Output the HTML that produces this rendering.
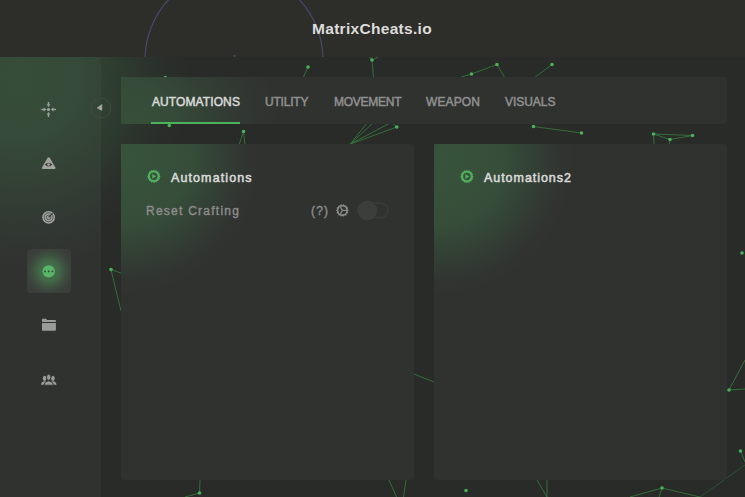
<!DOCTYPE html>
<html><head><meta charset="utf-8">
<style>
*{margin:0;padding:0;box-sizing:border-box}
html,body{width:745px;height:497px;overflow:hidden;background:#292b29;font-family:"Liberation Sans",sans-serif}
.abs{position:absolute}
#hdr{left:0;top:0;width:745px;height:57px;background:#2d2e29;overflow:hidden}
#title{left:312px;top:19.5px;font-size:15.5px;font-weight:bold;color:#dcdcdc;white-space:nowrap;letter-spacing:0.3px}
#side{left:0;top:57px;width:101px;height:440px;background:#303230;
 background-image:radial-gradient(circle at 20px 23px,rgba(72,160,85,0.250) 0px,rgba(72,160,85,0.220) 60px,rgba(72,160,85,0.120) 110px,rgba(72,160,85,0.050) 150px,rgba(72,160,85,0.000) 190px)}
#content{left:101px;top:57px;width:644px;height:440px;
 background-image:radial-gradient(circle at -81px 23px,rgba(72,160,85,0.270) 0px,rgba(72,160,85,0.240) 60px,rgba(72,160,85,0.140) 100px,rgba(72,160,85,0.040) 140px,rgba(72,160,85,0.000) 170px)}
.card{background:#303230;border-radius:4px}
#tabs{left:121px;top:77px;width:606px;height:47px;}
#tabs::before{content:"";position:absolute;left:0;top:0;right:0;bottom:0;background-image:radial-gradient(circle at 5px 55px,rgba(72,160,85,0.270) 0px,rgba(72,160,85,0.234) 46px,rgba(72,160,85,0.108) 92px,rgba(72,160,85,0.027) 132px,rgba(72,160,85,0.000) 155px)}
#p1{left:121px;top:144px;width:293px;height:336px;}
#p1::before{content:"";position:absolute;left:0;top:0;right:0;bottom:0;background-image:radial-gradient(circle at 5px 15px,rgba(72,160,85,0.300) 0px,rgba(72,160,85,0.250) 65px,rgba(72,160,85,0.100) 100px,rgba(72,160,85,0.020) 122px,rgba(72,160,85,0.000) 135px)}
#p2{left:434px;top:144px;width:293px;height:336px;}
#p2::before{content:"";position:absolute;left:0;top:0;right:0;bottom:0;background-image:radial-gradient(circle at 5px 17px,rgba(72,160,85,0.300) 0px,rgba(72,160,85,0.250) 65px,rgba(72,160,85,0.100) 100px,rgba(72,160,85,0.020) 122px,rgba(72,160,85,0.000) 135px)}
.tab{position:absolute;top:17.5px;font-size:12px;font-weight:normal;color:#8f8f8f;white-space:nowrap;-webkit-text-stroke:0.5px #8f8f8f}
.tab.act{-webkit-text-stroke:0.5px #d8d8d8}
.tab.act{color:#d8d8d8}
#uline{left:30px;top:45px;width:89px;height:2px;background:#4cb35c}
.ptitle{position:absolute;font-size:12.5px;font-weight:normal;color:#d9d9d9;white-space:nowrap;letter-spacing:0.4px;-webkit-text-stroke:0.55px #d9d9d9}
.opt{position:absolute;font-size:12px;color:#8c8c8c;white-space:nowrap;-webkit-text-stroke:0.4px #8c8c8c}
#actbtn{left:27px;top:249px;width:44px;height:44px;border-radius:4px;background:#3a3d3a;
 background-image:radial-gradient(circle at 22px 22px,rgba(80,180,95,.5) 0,rgba(80,180,95,.36) 10px,rgba(80,180,95,.14) 17px,rgba(80,180,95,.04) 22px,rgba(80,180,95,0) 27px)}
</style></head><body>
<div id="hdr" class="abs">
 <svg class="abs" style="left:0;top:0" width="745" height="57">
  <circle cx="234" cy="60" r="89" fill="none" stroke="#474a6a" stroke-width="1.2"/>
  <circle cx="234.5" cy="56" r="0.9" fill="#4a4c70"/>
 </svg>
 <div id="title" class="abs">MatrixCheats.io</div>
</div>

<div id="content" class="abs"></div>
<svg class="abs" width="745" height="497" style="top:0;left:0">
 <g stroke="#377d40" stroke-width="0.8" fill="none">
  <line x1="308" y1="67" x2="303" y2="78"/>
  <line x1="372" y1="60" x2="373.5" y2="78"/>
  <line x1="372" y1="60" x2="378" y2="57"/>
  <line x1="372" y1="60" x2="369.5" y2="57"/>
  <line x1="461" y1="77" x2="471.5" y2="74"/>
  <line x1="471.5" y1="74" x2="497" y2="64.5"/>
  <line x1="497" y1="64.5" x2="505" y2="78"/>
  <line x1="552" y1="64.5" x2="534" y2="78"/>
  <line x1="243.5" y1="131.5" x2="245" y2="145"/>
  <line x1="243.5" y1="131.5" x2="239" y2="145"/>
  <line x1="396.8" y1="127" x2="350.4" y2="144"/>
  <line x1="350.4" y1="144" x2="367" y2="123"/>
  <line x1="350.4" y1="144" x2="373" y2="123"/>
  <line x1="350.4" y1="144" x2="390" y2="123"/>
  <line x1="396.8" y1="127" x2="392" y2="123"/>
  <line x1="533.5" y1="126.5" x2="581.5" y2="133"/>
  <line x1="653.5" y1="134" x2="670" y2="139.5"/>
  <line x1="670" y1="139.5" x2="692.5" y2="135.5"/>
  <line x1="653.5" y1="134" x2="692.5" y2="135.5"/>
  <line x1="653.5" y1="134" x2="654" y2="145"/>
  <line x1="670" y1="139.5" x2="669" y2="145"/>
  <line x1="111" y1="269.5" x2="122" y2="273.5"/>
  <line x1="111" y1="269.5" x2="121" y2="311"/>
  <line x1="414" y1="374" x2="434" y2="382"/>
  <line x1="389" y1="480" x2="396.5" y2="497"/>
  <line x1="406" y1="480" x2="403.5" y2="497"/>
  <line x1="199.5" y1="493" x2="200" y2="480"/>
  <line x1="199.5" y1="493" x2="185" y2="497"/>
  <line x1="537" y1="480" x2="547" y2="497"/>
  <line x1="547" y1="480" x2="547" y2="497"/>
  <line x1="662" y1="488" x2="630" y2="497"/>
  <line x1="662" y1="488" x2="700" y2="497"/>
  <line x1="662" y1="488" x2="659" y2="497"/>
  <line x1="700" y1="497" x2="745" y2="465" opacity=".6"/>
  <line x1="740.5" y1="451" x2="745" y2="462"/>
  <line x1="729" y1="390" x2="745" y2="360"/>
  <line x1="729" y1="390" x2="745" y2="389"/>
 </g>
 <g fill="#4cb05a">
  <circle cx="308" cy="67" r="1.8"/>
  <circle cx="165.3" cy="77.5" r="1.8"/>
  <circle cx="169.3" cy="125.5" r="1.8"/>
  <circle cx="372" cy="60" r="1.8"/>
  <circle cx="471.5" cy="74" r="1.8"/>
  <circle cx="497" cy="64.5" r="1.8"/>
  <circle cx="552" cy="64.5" r="1.8"/>
  <circle cx="243.5" cy="131.5" r="1.8"/>
  <circle cx="396.8" cy="127" r="1.8"/>
  <circle cx="533.5" cy="126.5" r="1.8"/>
  <circle cx="581.5" cy="133" r="1.8"/>
  <circle cx="653.5" cy="134" r="1.8"/>
  <circle cx="670" cy="139.5" r="1.8"/>
  <circle cx="692.5" cy="135.5" r="1.8"/>
  <circle cx="111" cy="269.5" r="1.8"/>
  <circle cx="199.5" cy="493" r="1.8"/>
  <circle cx="466" cy="490.5" r="1.8"/>
  <circle cx="662" cy="488" r="1.8"/>
  <circle cx="740.5" cy="451" r="1.8"/>
  <circle cx="742" cy="253" r="1.8"/>
  <circle cx="729" cy="390" r="1.8"/>
 </g>
</svg>

<div id="side" class="abs"></div>

<div id="actbtn" class="abs"></div>

<svg class="abs" width="125" height="497" style="top:0;left:0">
 <!-- collapse button -->
 <circle cx="100.9" cy="108.1" r="9.8" fill="none" stroke="#434b43" stroke-width="0.9"/>
 <path d="M96.7,108.1 L102.2,103.9 L102.2,111 Z" fill="#a3a5a3"/>
 <!-- crosshair icon -->
 <g fill="#a0a2a0" stroke="#a0a2a0" stroke-width="1.4">
  <line x1="48.5" y1="102" x2="48.5" y2="104.6"/>
  <path d="M46.6,104.2 L50.4,104.2 L48.5,106.9Z" stroke="none"/>
  <line x1="48.5" y1="117" x2="48.5" y2="114.4"/>
  <path d="M46.6,114.8 L50.4,114.8 L48.5,112.1Z" stroke="none"/>
  <line x1="41.3" y1="109.5" x2="44.1" y2="109.5"/>
  <path d="M43.7,107.6 L43.7,111.4 L46.4,109.5Z" stroke="none"/>
  <line x1="55.9" y1="109.5" x2="53.1" y2="109.5"/>
  <path d="M53.5,107.6 L53.5,111.4 L50.8,109.5Z" stroke="none"/>
  <circle cx="48.5" cy="109.5" r="1.6" stroke="none"/>
 </g>
 <!-- eye triangle -->
 <path d="M48.6,157.2 Q49.3,157.2 49.8,158 L55.4,167.6 Q56,169 54.6,169 L42.8,169 Q41.3,169 42,167.6 L47.5,158 Q48,157.2 48.6,157.2Z" fill="#a2a4a2"/>
 <path d="M44.9,164.6 Q48.6,160.9 52.3,164.6 Q48.6,168.3 44.9,164.6Z" fill="#2f3a30"/>
 <circle cx="48.6" cy="164.6" r="1.3" fill="#a2a4a2"/>
 <!-- radar -->
 <circle cx="48.6" cy="217.3" r="6.4" fill="#a0a2a0"/>
 <circle cx="48.6" cy="217.3" r="4.5" fill="none" stroke="#3a423a" stroke-width="0.75"/>
 <circle cx="48.6" cy="217.3" r="2.3" fill="none" stroke="#3a423a" stroke-width="0.75"/>
 <line x1="48.6" y1="217.3" x2="52.6" y2="213.3" stroke="#2f352f" stroke-width="1.1"/>
 <!-- active dots -->
 <circle cx="48.7" cy="271.4" r="6.2" fill="#5ab46a"/>
 <circle cx="45" cy="271.4" r="0.9" fill="#2f4a34"/>
 <circle cx="48.7" cy="271.4" r="0.9" fill="#2f4a34"/>
 <circle cx="52.4" cy="271.4" r="0.9" fill="#2f4a34"/>
 <!-- folder -->
 <path d="M42,319.5 Q42,318.8 42.7,318.8 L46,318.8 L47.2,320 L55.2,320 Q55.9,320 55.9,320.7 L55.9,322 L42,322Z" fill="#9a9c9a"/>
 <path d="M42,323 L55.9,323 L55.9,330.1 Q55.9,330.8 55.2,330.8 L42.7,330.8 Q42,330.8 42,330.1Z" fill="#9a9c9a"/>
 <!-- group -->
 <g fill="#9a9c9a">
  <ellipse cx="44.6" cy="378.3" rx="1.8" ry="2.6"/>
  <ellipse cx="52.9" cy="378.3" rx="1.8" ry="2.6"/>
  <path d="M40.9,384.8 Q41.3,381.6 44.6,381.2 Q47.5,381.4 48,384.8Z"/>
  <path d="M56.6,384.8 Q56.2,381.6 52.9,381.2 Q50,381.4 49.5,384.8Z"/>
 </g>
 <g fill="#9a9c9a" stroke="#303230" stroke-width="0.9">
  <ellipse cx="48.7" cy="377.2" rx="2.2" ry="3"/>
  <path d="M43.8,385.2 Q44.3,381.3 48.7,380.8 Q53.1,381.3 53.6,385.2Z"/>
 </g>
</svg>

<div id="tabs" class="abs card">
 <div class="tab act" style="left:31px;letter-spacing:0.1px">AUTOMATIONS</div>
 <div class="tab" style="left:144px;letter-spacing:-0.2px">UTILITY</div>
 <div class="tab" style="left:213px;letter-spacing:-0.25px">MOVEMENT</div>
 <div class="tab" style="left:305px;letter-spacing:0.1px">WEAPON</div>
 <div class="tab" style="left:384px;letter-spacing:-0.05px">VISUALS</div>
 <div id="uline" class="abs"></div>
</div>

<div id="p1" class="abs card">
 <svg class="abs" style="left:0;top:0" width="293" height="100">
  <path transform="translate(32.8,32.3)" fill="#50ae5e" fill-rule="evenodd" d="M0.00,-6.80 L1.11,-5.59 L2.60,-6.28 L3.17,-4.74 L4.81,-4.81 L4.74,-3.17 L6.28,-2.60 L5.59,-1.11 L6.80,0.00 L5.59,1.11 L6.28,2.60 L4.74,3.17 L4.81,4.81 L3.17,4.74 L2.60,6.28 L1.11,5.59 L0.00,6.80 L-1.11,5.59 L-2.60,6.28 L-3.17,4.74 L-4.81,4.81 L-4.74,3.17 L-6.28,2.60 L-5.59,1.11 L-6.80,0.00 L-5.59,-1.11 L-6.28,-2.60 L-4.74,-3.17 L-4.81,-4.81 L-3.17,-4.74 L-2.60,-6.28 L-1.11,-5.59Z M3.7,0 A3.7,3.7 0 1,0 -3.7,0 A3.7,3.7 0 1,0 3.7,0Z"/>
  <path transform="translate(32.8,32.3)" fill="#50ae5e" d="M-1.5,-2.4 L2.4,0 L-1.5,2.4Z"/>
  <path transform="translate(221.4,66.4)" fill="#8c8e8c" fill-rule="evenodd" d="M6.40,0.00 L5.26,1.20 L5.77,2.78 L4.22,3.37 L3.99,5.00 L2.34,4.87 L1.42,6.24 L0.00,5.40 L-1.42,6.24 L-2.34,4.87 L-3.99,5.00 L-4.22,3.37 L-5.77,2.78 L-5.26,1.20 L-6.40,0.00 L-5.26,-1.20 L-5.77,-2.78 L-4.22,-3.37 L-3.99,-5.00 L-2.34,-4.87 L-1.42,-6.24 L-0.00,-5.40 L1.42,-6.24 L2.34,-4.87 L3.99,-5.00 L4.22,-3.37 L5.77,-2.78 L5.26,-1.20Z M3.9,0 A3.9,3.9 0 1,0 -3.9,0 A3.9,3.9 0 1,0 3.9,0Z"/>
  <g transform="translate(221.4,66.4)" stroke="#8c8e8c" stroke-width="1.2">
   <line x1="0" y1="0" x2="4" y2="0"/>
   <line x1="0" y1="0" x2="-2" y2="-3.46"/>
   <line x1="0" y1="0" x2="-2" y2="3.46"/>
  </g>
  <!-- toggle -->
  <rect x="236.5" y="59" width="30.5" height="14.8" rx="7.4" fill="none" stroke="#3c3f3c" stroke-width="1"/>
  <circle cx="246.3" cy="66.4" r="9.9" fill="#3c3e3c"/>
 </svg>
 <div class="ptitle" style="left:50px;top:27px;letter-spacing:1.1px">Automations</div>
 <div class="opt" style="left:25px;top:60px;letter-spacing:1.25px">Reset Crafting</div>
 <div class="opt" style="left:190px;top:60px;letter-spacing:1.2px">(?)</div>
</div>
<div id="p2" class="abs card">
 <svg class="abs" style="left:0;top:0" width="293" height="60">
  <path transform="translate(32.9,32.5)" fill="#50ae5e" fill-rule="evenodd" d="M0.00,-6.80 L1.11,-5.59 L2.60,-6.28 L3.17,-4.74 L4.81,-4.81 L4.74,-3.17 L6.28,-2.60 L5.59,-1.11 L6.80,0.00 L5.59,1.11 L6.28,2.60 L4.74,3.17 L4.81,4.81 L3.17,4.74 L2.60,6.28 L1.11,5.59 L0.00,6.80 L-1.11,5.59 L-2.60,6.28 L-3.17,4.74 L-4.81,4.81 L-4.74,3.17 L-6.28,2.60 L-5.59,1.11 L-6.80,0.00 L-5.59,-1.11 L-6.28,-2.60 L-4.74,-3.17 L-4.81,-4.81 L-3.17,-4.74 L-2.60,-6.28 L-1.11,-5.59Z M3.7,0 A3.7,3.7 0 1,0 -3.7,0 A3.7,3.7 0 1,0 3.7,0Z"/>
  <path transform="translate(32.9,32.5)" fill="#50ae5e" d="M-1.5,-2.4 L2.4,0 L-1.5,2.4Z"/>
 </svg>
 <div class="ptitle" style="left:50px;top:27px;letter-spacing:0.95px">Automations2</div>
</div>

</body></html>
